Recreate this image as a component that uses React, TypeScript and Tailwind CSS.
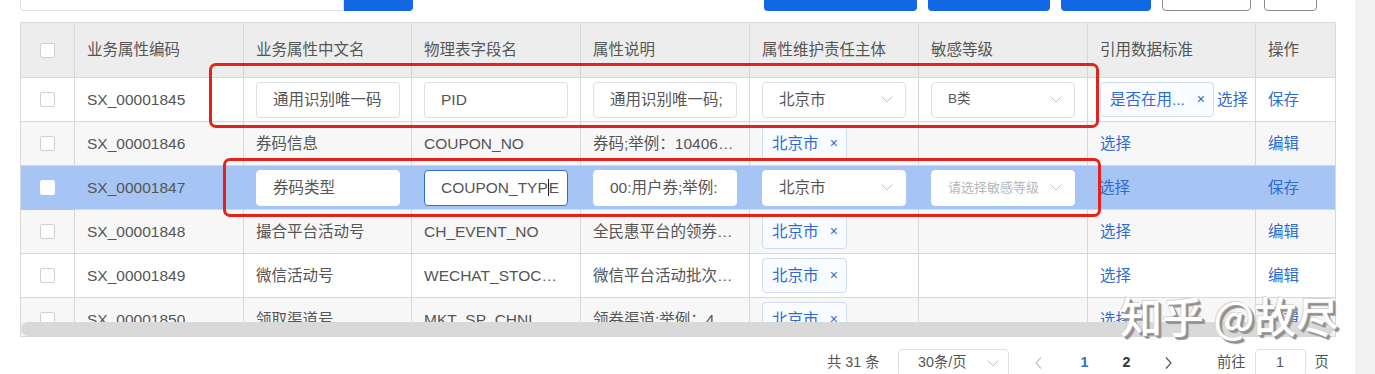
import React from "react";

const GRID =
  "grid grid-cols-[54px_169px_168px_169px_169px_169px_169px_168px_80px]";

const Chevron: React.FC<{ className?: string }> = ({ className }) => (
  <svg width="12" height="7" viewBox="0 0 12 7" className={className}>
    <polyline
      points="0.5,0.5 6,6 11.5,0.5"
      fill="none"
      stroke="#c0c4cc"
      strokeWidth="1"
    />
  </svg>
);

const Arrow: React.FC<{ left?: boolean; color: string }> = ({ left, color }) => (
  <svg width="7" height="12" viewBox="0 0 7 12">
    <polyline
      points={left ? "6,0.5 1,6 6,11.5" : "1,0.5 6,6 1,11.5"}
      fill="none"
      stroke={color}
      strokeWidth="1.2"
    />
  </svg>
);

const Checkbox: React.FC<{ active?: boolean }> = ({ active }) => (
  <span
    className={`block w-[15px] h-[15px] rounded-[2px] border bg-white ${
      active ? "border-white" : "border-[#cfcfcf]"
    }`}
  />
);

const Input: React.FC<{ text: string; active?: boolean }> = ({ text, active }) => (
  <div
    className={`flex items-center w-[144px] h-[36px] shrink-0 rounded-[4px] border bg-white pl-[16px] pr-[8px] overflow-hidden whitespace-nowrap text-[#555] ${
      active ? "border-white" : "border-[#dcdfe6]"
    }`}
  >
    <span className="block max-w-[112px] overflow-hidden">{text}</span>
  </div>
);

const Select: React.FC<{
  text: string;
  placeholder?: boolean;
  small?: boolean;
  active?: boolean;
}> = ({ text, placeholder, small, active }) => (
  <div
    className={`flex items-center justify-between w-[144px] h-[36px] shrink-0 rounded-[4px] border bg-white pl-[16px] pr-[12px] whitespace-nowrap ${
      active ? "border-white" : "border-[#dcdfe6]"
    }`}
  >
    <span
      className={`overflow-hidden ${
        placeholder
          ? "text-[13px] text-[#b4b7bd]"
          : small
          ? "text-[13.5px] text-[#555]"
          : "text-[#555]"
      }`}
    >
      {text}
    </span>
    <Chevron className="shrink-0 ml-[6px]" />
  </div>
);

const Tag: React.FC<{ text: string; wide?: boolean }> = ({ text, wide }) => (
  <div
    className={`flex items-center justify-between h-[35px] shrink-0 rounded-[4px] border border-[#cfdcef] bg-[#f8fbff] pl-[9px] pr-[8px] text-[#2f6ccc] whitespace-nowrap ${
      wide ? "w-[114px]" : "w-[85px]"
    }`}
  >
    <span className="overflow-hidden">{text}</span>
    <span className="text-[14px] ml-[6px]">×</span>
  </div>
);

const Link: React.FC<{ text: string }> = ({ text }) => (
  <span className="text-[#2f6ccc]">{text}</span>
);

const Text: React.FC<{ text: string }> = ({ text }) => (
  <span className="truncate whitespace-nowrap">{text}</span>
);

interface RowProps {
  cells: React.ReactNode[];
  bg: string;
  active?: boolean;
}

const Row: React.FC<RowProps> = ({ cells, bg, active }) => (
  <div className={`${GRID} h-[44px] ${bg}`}>
    <div
      className={`flex items-center justify-center border-r border-b ${
        active ? "border-[#a6c5f5]" : "border-[#d8d8d8]"
      }`}
    >
      <Checkbox active={active} />
    </div>
    {cells.map((c, i) => (
      <div
        key={i}
        className={`flex items-center px-[12px] border-r border-b overflow-hidden ${
          active && i < 7 ? "border-r-[#a6c5f5]" : "border-r-[#d8d8d8]"
        } border-b-[#d8d8d8]`}
      >
        {c}
      </div>
    ))}
  </div>
);

const headers = [
  "业务属性编码",
  "业务属性中文名",
  "物理表字段名",
  "属性说明",
  "属性维护责任主体",
  "敏感等级",
  "引用数据标准",
  "操作",
];

const App: React.FC = () => {
  return (
    <div className="relative flex w-[1375px] h-[374px] overflow-hidden bg-white [font-family:'Liberation_Sans','Noto_Sans_CJK_SC',sans-serif] text-[15.5px] text-[#555]">
      <div className="w-[1355px] shrink-0">
        {/* toolbar, cut off at the top */}
        <div className="flex items-end h-[11px] overflow-hidden">
          <div className="ml-[20px] w-[324px] h-[32px] shrink-0 border border-[#dcdfe6] rounded-l-[4px] bg-white" />
          <div className="w-[69px] h-[32px] shrink-0 bg-[#1167e4] rounded-r-[4px]" />
          <div className="ml-[351px] w-[153px] h-[32px] shrink-0 bg-[#1167e4] rounded-[4px]" />
          <div className="ml-[11px] w-[122px] h-[32px] shrink-0 bg-[#1167e4] rounded-[4px]" />
          <div className="ml-[11px] w-[90px] h-[32px] shrink-0 bg-[#1167e4] rounded-[4px]" />
          <div className="ml-[11px] w-[89px] h-[32px] shrink-0 bg-white border border-[#8a8a8a] rounded-[4px]" />
          <div className="ml-[13px] w-[53px] h-[32px] shrink-0 bg-white border border-[#8a8a8a] rounded-[4px]" />
        </div>

        {/* table */}
        <div className="ml-[20px] mt-[11px] w-[1316px] border-l border-t border-b border-[#d8d8d8]">
          <div className="h-[299px] overflow-hidden">
            <div className={`${GRID} h-[55px] bg-[#ededed] text-[#555]`}>
              <div className="flex items-center justify-center border-r border-b border-[#d8d8d8]">
                <Checkbox />
              </div>
              {headers.map((h) => (
                <div
                  key={h}
                  className="flex items-center px-[12px] border-r border-b border-[#d8d8d8] whitespace-nowrap"
                >
                  {h}
                </div>
              ))}
            </div>

            <Row
              bg="bg-white"
              cells={[
                <Text text="SX_00001845" />,
                <Input text="通用识别唯一码" />,
                <Input text="PID" />,
                <Input text="通用识别唯一码;举例" />,
                <Select text="北京市" />,
                <Select text="B类" small />,
                <div className="flex items-center">
                  <Tag text="是否在用..." wide />
                  <span className="ml-[3px] whitespace-nowrap">
                    <Link text="选择" />
                  </span>
                </div>,
                <Link text="保存" />,
              ]}
            />
            <Row
              bg="bg-[#f7f7f7]"
              cells={[
                <Text text="SX_00001846" />,
                <Text text="券码信息" />,
                <Text text="COUPON_NO" />,
                <Text text="券码;举例：10406…" />,
                <Tag text="北京市" />,
                null,
                <Link text="选择" />,
                <Link text="编辑" />,
              ]}
            />
            <Row
              bg="bg-[#a6c5f5]"
              active
              cells={[
                <Text text="SX_00001847" />,
                <Input text="券码类型" active />,
                <div className="flex items-center w-[144px] h-[36px] shrink-0 rounded-[4px] border border-[#2f6fd3] bg-white pl-[16px] whitespace-nowrap overflow-hidden text-[#555]">
                  COUPON_TYP
                  <span className="inline-block w-px h-[17px] bg-[#222]" />E
                </div>,
                <Input text="00:用户券;举例:" active />,
                <Select text="北京市" active />,
                <Select text="请选择敏感等级" placeholder active />,
                <span className="-ml-[1px]">
                  <Link text="选择" />
                </span>,
                <Link text="保存" />,
              ]}
            />
            <Row
              bg="bg-[#f7f7f7]"
              cells={[
                <Text text="SX_00001848" />,
                <Text text="撮合平台活动号" />,
                <Text text="CH_EVENT_NO" />,
                <Text text="全民惠平台的领券…" />,
                <Tag text="北京市" />,
                null,
                <Link text="选择" />,
                <Link text="编辑" />,
              ]}
            />
            <Row
              bg="bg-white"
              cells={[
                <Text text="SX_00001849" />,
                <Text text="微信活动号" />,
                <Text text="WECHAT_STOC…" />,
                <Text text="微信平台活动批次…" />,
                <Tag text="北京市" />,
                null,
                <Link text="选择" />,
                <Link text="编辑" />,
              ]}
            />
            <Row
              bg="bg-[#f7f7f7]"
              cells={[
                <Text text="SX_00001850" />,
                <Text text="领取渠道号" />,
                <Text text="MKT_SP_CHNL" />,
                <Text text="领券渠道;举例：4" />,
                <Tag text="北京市" />,
                null,
                <Link text="选择" />,
                <Link text="编辑" />,
              ]}
            />
          </div>
          {/* horizontal scrollbar */}
          <div className="h-[14px] bg-[#f2f2f2] border-r border-[#d8d8d8]">
            <div className="h-[14px] w-[1312px] rounded-[7px] bg-[#d9d9d9]" />
          </div>
        </div>

        {/* pagination */}
        <div className="flex items-center h-[28px] mt-[12px] pl-[827px] text-[14.3px] text-[#555] whitespace-nowrap">
          <span className="w-[53px]">共 31 条</span>
          <div className="ml-[18px] flex items-center justify-between w-[111px] h-[28px] border border-[#dcdfe6] rounded-[4px] pl-[19px] pr-[9px]">
            <span>30条/页</span>
            <Chevron />
          </div>
          <span className="ml-[17px] w-[24px] flex justify-center">
            <Arrow left color="#c0c4cc" />
          </span>
          <span className="ml-[22px] w-[25px] text-center font-bold text-[#2f6ccc]">1</span>
          <span className="ml-[17px] w-[25px] text-center font-bold text-[#333]">2</span>
          <span className="ml-[17px] w-[24px] flex justify-center">
            <Arrow color="#555" />
          </span>
          <span className="ml-[37px]">前往</span>
          <div className="ml-[9px] flex items-center justify-center w-[51px] h-[28px] border border-[#dcdfe6] rounded-[4px]">
            1
          </div>
          <span className="ml-[9px]">页</span>
        </div>
      </div>

      <div className="w-[20px] h-[374px] shrink-0 bg-[#f1f1f1]" />

      {/* annotation boxes */}
      <div className="absolute left-[209px] top-[63px] w-[890px] h-[65px] border-[3px] border-[#e3231b] rounded-[7px]" />
      <div className="absolute left-[223px] top-[158px] w-[878px] h-[59px] border-[3px] border-[#e3231b] rounded-[7px]" />

      {/* watermark */}
      <div className="absolute left-[1120px] top-[290px] text-[42px] leading-[50px] font-medium text-white whitespace-nowrap [font-family:'Noto_Sans_CJK_SC',sans-serif] [text-shadow:1px_1px_0_#a0a0a0,2px_2px_0_#8c8c8c,3px_3px_1px_#9a9a9a,-1px_-1px_0_#d6d6d6]">
        知乎 @故尽
      </div>
    </div>
  );
};

export default App;
